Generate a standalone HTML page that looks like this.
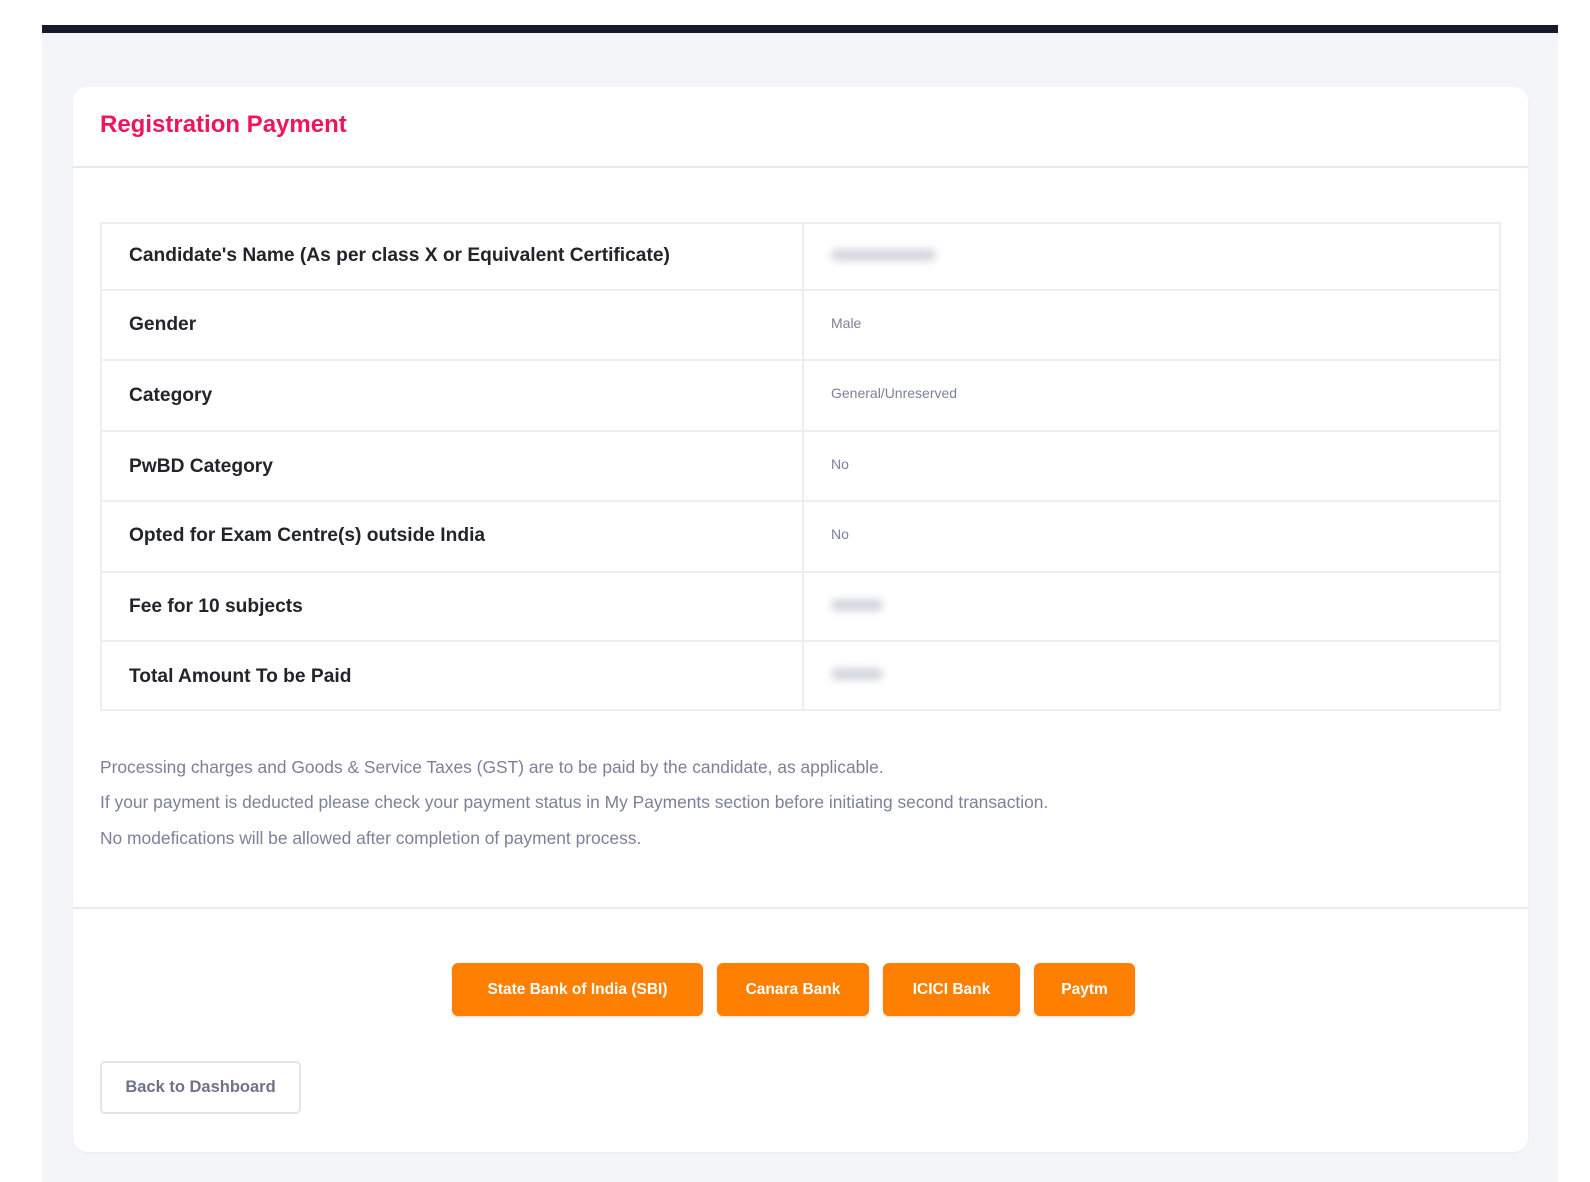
<!DOCTYPE html>
<html><head><meta charset="utf-8"><style>
*{margin:0;padding:0;box-sizing:border-box}
html,body{width:1590px;height:1182px;background:#fff;overflow:hidden;font-family:"Liberation Sans",sans-serif}
.bg{position:absolute;left:42px;top:25px;width:1516px;height:1157px;background:#f4f5f9}
.bar{position:absolute;left:42px;top:25px;width:1516px;height:8px;background:#161a2e}
.card{position:absolute;left:73px;top:87px;width:1455px;height:1065px;background:#fff;border-radius:14px;box-shadow:0 1px 2px rgba(0,0,0,.05)}
.title{position:absolute;left:27px;top:24px;font-size:24px;font-weight:bold;color:#f0155a}
.hl{position:absolute;left:0;width:1455px;height:2px;background:#e8e9ef}
.tbl{position:absolute;left:27px;top:135px;width:1401px;height:489px;border:2px solid #eceef3}
.row{position:absolute;left:0;width:1397px;border-top:2px solid #eceef3}
.lab{position:absolute;left:27px;font-size:19.2px;font-weight:bold;color:#23242b}
.val{position:absolute;left:729px;font-size:14px;color:#7d8199}
.vl{position:absolute;left:700px;top:0;width:2px;height:487px;background:#eceef3}
.blob{position:absolute;left:729px;height:12px;background:#d4d6df;filter:blur(4px);border-radius:6px}
.note{position:absolute;left:27px;font-size:17.4px;color:#7c8199}
.btn{position:absolute;top:876px;height:53px;background:#ff7f00;color:#fff;border-radius:6px;font-size:15.5px;font-weight:bold;display:flex;align-items:center;justify-content:center;box-shadow:0 1px 2px rgba(0,0,0,.15)}
.back{position:absolute;left:27px;top:974px;width:201px;height:53px;border:2px solid #e3e5ec;border-radius:5px;color:#6f7389;font-size:16.5px;font-weight:bold;display:flex;align-items:center;justify-content:center}
</style></head><body>
<div class="bg"></div><div class="bar"></div>
<div class="card">
<div class="title">Registration Payment</div>
<div class="hl" style="top:79px"></div>
<div class="tbl">
<div class="vl"></div>
<div class="row" style="top:-2px;height:69px;border-top:none"><div class="lab" style="top:23px">Candidate's Name (As per class X or Equivalent Certificate)</div><div class="blob" style="top:27px;width:105px"></div></div>
<div class="row" style="top:65px;height:70px"><div class="lab" style="top:23px">Gender</div><div class="val" style="top:24px">Male</div></div>
<div class="row" style="top:135px;height:71px"><div class="lab" style="top:24px">Category</div><div class="val" style="top:24px">General/Unreserved</div></div>
<div class="row" style="top:206px;height:70px"><div class="lab" style="top:24px">PwBD Category</div><div class="val" style="top:24px">No</div></div>
<div class="row" style="top:276px;height:71px"><div class="lab" style="top:23px">Opted for Exam Centre(s) outside India</div><div class="val" style="top:24px">No</div></div>
<div class="row" style="top:347px;height:69px"><div class="lab" style="top:23px">Fee for 10 subjects</div><div class="blob" style="top:26px;width:52px"></div></div>
<div class="row" style="top:416px;height:71px"><div class="lab" style="top:24px">Total Amount To be Paid</div><div class="blob" style="top:26px;width:52px"></div></div>
</div>
<div class="note" style="top:670px">Processing charges and Goods &amp; Service Taxes (GST) are to be paid by the candidate, as applicable.</div>
<div class="note" style="top:705px">If your payment is deducted please check your payment status in My Payments section before initiating second transaction.</div>
<div class="note" style="top:741px">No modefications will be allowed after completion of payment process.</div>
<div class="hl" style="top:820px"></div>
<div class="btn" style="left:379px;width:251px">State Bank of India (SBI)</div>
<div class="btn" style="left:644px;width:152px">Canara Bank</div>
<div class="btn" style="left:810px;width:137px">ICICI Bank</div>
<div class="btn" style="left:961px;width:101px">Paytm</div>
<div class="back">Back to Dashboard</div>
</div>
</body></html>
